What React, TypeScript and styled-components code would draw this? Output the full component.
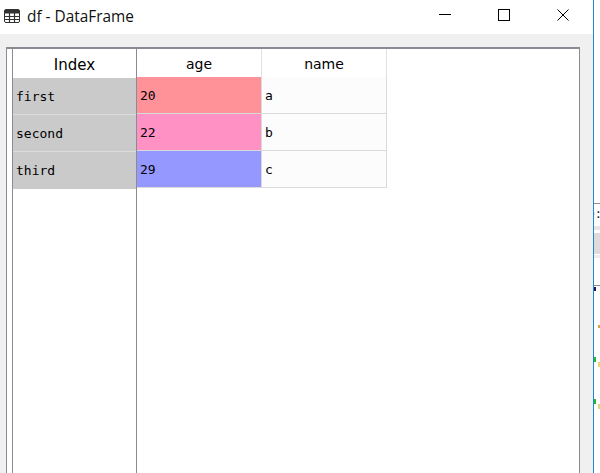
import React from 'react';
import styled, {createGlobalStyle} from 'styled-components';

const GlobalStyle = createGlobalStyle`
  html, body {
    margin: 0;
    padding: 0;
    background: #fff;
  }
  #root {
    width: 600px;
    height: 473px;
    overflow: hidden;
  }
`

type CellProps = {
    $bg?: string
}

const rows = [
    {index: 'first', age: '20', name: 'a', color: '#ff9198'},
    {index: 'second', age: '22', name: 'b', color: '#ff91c4'},
    {index: 'third', age: '29', name: 'c', color: '#9598ff'},
]

const App: React.FC = () => {
    return (
        <>
            <GlobalStyle/>
            <Screen>
                <Window>
                    <TitleBar>
                        <TitleIcon width="16" height="14" viewBox="0 0 16 14" fill="none">
                            <rect x="0.5" y="0.5" width="15" height="13" rx="1.5" fill="#fff" stroke="#333"/>
                            <path d="M0.5 1H15.5V4.5H0.5Z" fill="#333"/>
                            <path d="M0.5 7.5H15.5M0.5 10.5H15.5M5.5 1V13.5M10.5 1V13.5" stroke="#333" strokeWidth="1.2"/>
                        </TitleIcon>
                        <Title>df - DataFrame</Title>
                        <Controls>
                            <ControlButton>
                                <svg width="12" height="12" viewBox="0 0 12 12"><path d="M0 5.5H12" stroke="#000"/></svg>
                            </ControlButton>
                            <ControlButton>
                                <svg width="12" height="12" viewBox="0 0 12 12"><rect x="0.5" y="0.5" width="11" height="11" fill="none" stroke="#000"/></svg>
                            </ControlButton>
                            <ControlButton>
                                <svg width="12" height="12" viewBox="0 0 12 12"><path d="M0.5 0.5L11.5 11.5M11.5 0.5L0.5 11.5" stroke="#000"/></svg>
                            </ControlButton>
                        </Controls>
                    </TitleBar>
                    <Content>
                        <Frame>
                            <Editor>
                                <FrozenColumn>
                                    <IndexHeader>Index</IndexHeader>
                                    {rows.map(r => <IndexCell key={r.index}>{r.index}</IndexCell>)}
                                </FrozenColumn>
                                <DataTable>
                                    <HeaderCell>age</HeaderCell>
                                    <HeaderCell>name</HeaderCell>
                                    {rows.map(r => (
                                        <React.Fragment key={r.index}>
                                            <DataCell $bg={r.color}>{r.age}</DataCell>
                                            <DataCell>{r.name}</DataCell>
                                        </React.Fragment>
                                    ))}
                                </DataTable>
                            </Editor>
                        </Frame>
                    </Content>
                </Window>
                <BehindStrip>
                    <BehindLine/>
                    <BehindText><span>e:</span></BehindText>
                    <BehindBar $height={4} $color="#e6e6e6" $margin={3}/>
                    <BehindBar $height={21} $color="#dcdcdc" $margin={1}/>
                    <BehindBar $height={3} $color="#ececec" $margin={0}/>
                    <BehindLine $margin={27}/>
                    <BehindMark $color="#1a1a60" $width={2} $height={4} $margin={1}/>
                    <BehindMark $color="#d9a050" $width={2} $height={3} $margin={34} $left={4}/>
                    <BehindMark $color="#22b830" $width={2} $height={5} $margin={29}/>
                    <BehindMark $color="#e6d870" $width={2} $height={5} $margin={0} $left={4}/>
                    <BehindMark $color="#22b830" $width={2} $height={5} $margin={32}/>
                    <BehindMark $color="#e6d870" $width={2} $height={5} $margin={0} $left={4}/>
                </BehindStrip>
            </Screen>
        </>
    );
};

export default App;

// Style
const Screen = styled.div`
  display: flex;
  width: 600px;
  height: 473px;
  overflow: hidden;
`
const Window = styled.div`
  display: flex;
  flex-direction: column;
  width: 593px;
  height: 473px;
  flex-shrink: 0;
`
// Title bar
const TitleBar = styled.div`
  display: flex;
  align-items: center;
  height: 34px;
  flex-shrink: 0;
  padding-left: 4px;
  background: #fff;
`
const TitleIcon = styled.svg`
  flex-shrink: 0;
  margin-right: 7px;
  margin-top: -3px;
`
const Title = styled.div`
  font-family: "Open Sans", sans-serif;
  font-size: 15.4px;
  color: #111;
  margin-top: -2px;
`
const Controls = styled.div`
  display: flex;
  margin-left: auto;
  margin-top: -4px;
  padding-right: 1px;
`
const ControlButton = styled.div`
  display: flex;
  align-items: center;
  justify-content: center;
  width: 59px;
  height: 30px;
`
// Content
const Content = styled.div`
  flex: 1;
  display: flex;
  background: #f0f0f0;
  padding: 13px 13px 0 6px;
`
const Frame = styled.div`
  flex: 1;
  box-sizing: border-box;
  padding-left: 5px;
  background: #fff;
  border: 1px solid #8b8b93;
  border-top-width: 2px;
  border-bottom: 0;
`
const Editor = styled.div`
  display: flex;
  height: 100%;
`
const FrozenColumn = styled.div`
  box-sizing: border-box;
  width: 125px;
  flex-shrink: 0;
  border-left: 1px solid #8b8b93;
  border-right: 1px solid #8b8b93;
`
const IndexHeader = styled.div`
  display: flex;
  align-items: center;
  justify-content: center;
  height: 29px;
  padding-top: 2px;
  box-sizing: border-box;
  font-family: "DejaVu Sans", sans-serif;
  font-size: 15px;
  color: #000;
`
const IndexCell = styled.div`
  display: flex;
  align-items: center;
  box-sizing: border-box;
  height: 37px;
  padding-left: 3px;
  background: #cacaca;
  border-bottom: 1px solid #dcdcdc;
  font-family: "DejaVu Sans Mono", monospace;
  font-size: 13px;
  color: #000;

  &:last-child {
    border-bottom: 0;
  }
`
const DataTable = styled.div`
  display: grid;
  grid-template-columns: 125px 125px;
  grid-template-rows: 28px repeat(3, 37px);
  align-self: flex-start;
`
const HeaderCell = styled.div`
  display: flex;
  align-items: center;
  justify-content: center;
  box-sizing: border-box;
  padding-top: 2px;
  border-right: 1px solid #e2e2e2;
  font-family: "DejaVu Sans", sans-serif;
  font-size: 14px;
  color: #000;
`
const DataCell = styled.div<CellProps>`
  display: flex;
  align-items: center;
  box-sizing: border-box;
  padding-left: 3px;
  background: ${props => props.$bg || '#fcfcfc'};
  border-right: 1px solid #dadada;
  border-bottom: 1px solid #dadada;
  font-family: "DejaVu Sans Mono", monospace;
  font-size: 13px;
  color: #000;
`
// The window behind
const BehindStrip = styled.div`
  display: flex;
  flex-direction: column;
  box-sizing: border-box;
  width: 7px;
  padding-top: 203px;
  border-left: 1px solid #1f86d8;
  background: #fff;
`
const BehindLine = styled.div<{ $margin?: number }>`
  height: 1px;
  margin-top: ${props => props.$margin || 0}px;
  background: #8f8f8f;
`
const BehindText = styled.div`
  display: flex;
  justify-content: flex-end;
  height: 22px;
  font-family: "DejaVu Sans Mono", monospace;
  font-size: 12px;
  line-height: 20px;
  color: #222;
  overflow: hidden;
  white-space: nowrap;

  & span {
    margin-right: -2px;
  }
`
const BehindBar = styled.div<{ $height: number, $color: string, $margin: number }>`
  height: ${props => props.$height}px;
  margin-bottom: ${props => props.$margin}px;
  background: ${props => props.$color};
`
const BehindMark = styled.div<{ $color: string, $width: number, $height: number, $margin: number, $left?: number }>`
  flex-shrink: 0;
  width: ${props => props.$width}px;
  height: ${props => props.$height}px;
  margin-top: ${props => props.$margin}px;
  margin-left: ${props => props.$left || 0}px;
  background: ${props => props.$color};
`
